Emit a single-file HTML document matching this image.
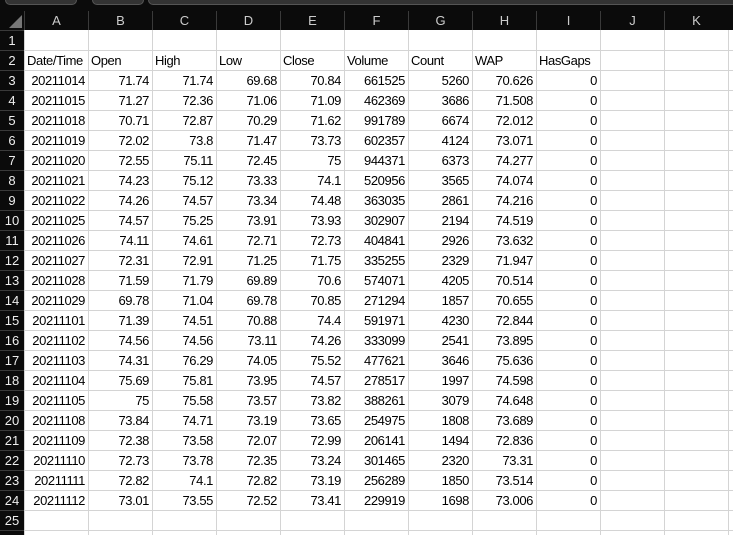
<!DOCTYPE html>
<html><head><style>
html,body{margin:0;width:733px;height:535px;overflow:hidden;background:#fff;font-family:"Liberation Sans",sans-serif;position:relative}
.top{position:absolute;left:0;top:0;width:733px;height:30px;background:#0b0b0b}
.tab{position:absolute;top:-6px;height:9px;background:#333;border:1px solid #555;border-radius:0 0 5px 5px}
.ch{position:absolute;top:11px;height:19px;width:64px;text-align:center;color:#ccc;font-size:13px;line-height:19px;border-left:1px solid #3a3a3a;box-sizing:border-box}
.rh{position:absolute;left:0;width:24px;background:#0b0b0b;color:#eee;font-size:13px;text-align:center;box-sizing:border-box;height:20px;line-height:20px;border-top:1px solid #3a3a3a}
.vl{position:absolute;top:30px;width:1px;height:505px;background:#d4d4d4}
.hl{position:absolute;left:24px;width:709px;height:1px;background:#d4d4d4}
.c{position:absolute;height:20px;line-height:21px;font-size:13px;letter-spacing:-0.4px;color:#000;width:61px;white-space:nowrap;overflow:hidden}
.r{text-align:right}
</style></head><body>
<div class="top"></div>
<div class="tab" style="left:5px;width:70px"></div>
<div class="tab" style="left:92px;width:50px"></div>
<div class="tab" style="left:148px;width:600px"></div>
<svg style="position:absolute;left:9px;top:15px" width="13" height="13"><polygon points="13,0 13,13 0,13" fill="#777"/></svg>
<div id="g"></div>
<script>
let h='';const cols='ABCDEFGHIJK';
for(let i=0;i<11;i++){h+=`<div class="ch" style="left:${24+i*64}px">${cols[i]}</div>`;h+=`<div class="vl" style="left:${24+i*64}px"></div>`}
h+=`<div class="vl" style="left:728px"></div>`;
for(let r=0;r<26;r++){h+=`<div class="rh" style="top:${30+r*20}px">${r<25?r+1:''}</div>`;h+=`<div class="hl" style="top:${50+r*20}px"></div>`}
const hd=['Date/Time','Open','High','Low','Close','Volume','Count','WAP','HasGaps'];
hd.forEach((t,i)=>{h+=`<div class="c" style="left:${27+i*64}px;top:50px">${t}</div>`});
const d=`20211014 71.74 71.74 69.68 70.84 661525 5260 70.626 0
20211015 71.27 72.36 71.06 71.09 462369 3686 71.508 0
20211018 70.71 72.87 70.29 71.62 991789 6674 72.012 0
20211019 72.02 73.8 71.47 73.73 602357 4124 73.071 0
20211020 72.55 75.11 72.45 75 944371 6373 74.277 0
20211021 74.23 75.12 73.33 74.1 520956 3565 74.074 0
20211022 74.26 74.57 73.34 74.48 363035 2861 74.216 0
20211025 74.57 75.25 73.91 73.93 302907 2194 74.519 0
20211026 74.11 74.61 72.71 72.73 404841 2926 73.632 0
20211027 72.31 72.91 71.25 71.75 335255 2329 71.947 0
20211028 71.59 71.79 69.89 70.6 574071 4205 70.514 0
20211029 69.78 71.04 69.78 70.85 271294 1857 70.655 0
20211101 71.39 74.51 70.88 74.4 591971 4230 72.844 0
20211102 74.56 74.56 73.11 74.26 333099 2541 73.895 0
20211103 74.31 76.29 74.05 75.52 477621 3646 75.636 0
20211104 75.69 75.81 73.95 74.57 278517 1997 74.598 0
20211105 75 75.58 73.57 73.82 388261 3079 74.648 0
20211108 73.84 74.71 73.19 73.65 254975 1808 73.689 0
20211109 72.38 73.58 72.07 72.99 206141 1494 72.836 0
20211110 72.73 73.78 72.35 73.24 301465 2320 73.31 0
20211111 72.82 74.1 72.82 73.19 256289 1850 73.514 0
20211112 73.01 73.55 72.52 73.41 229919 1698 73.006 0`.split('\n');
d.forEach((l,r)=>{l.split(' ').forEach((v,i)=>{h+=`<div class="c r" style="left:${24+i*64}px;top:${70+r*20}px">${v}</div>`})});
document.getElementById('g').innerHTML=h;
</script>
</body></html>
